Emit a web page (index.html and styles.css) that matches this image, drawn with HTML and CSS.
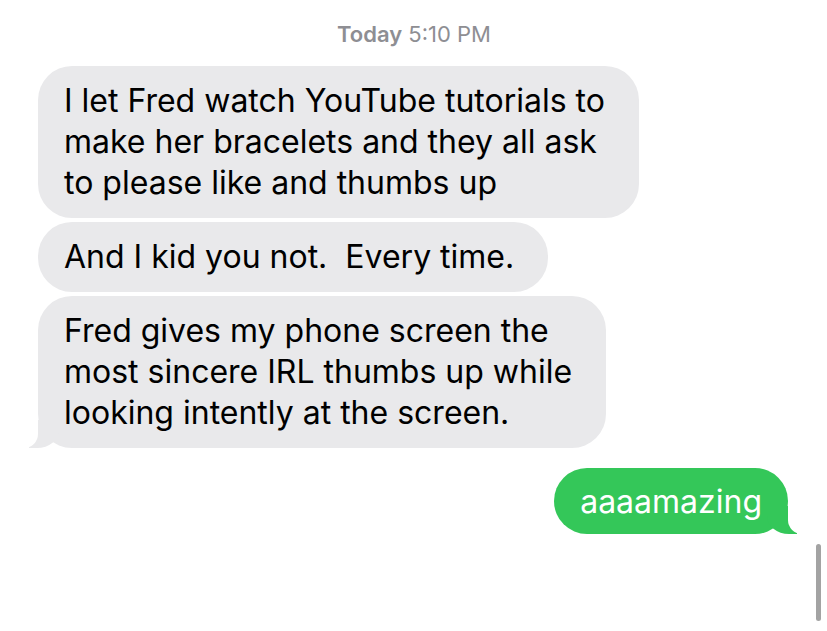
FILE: index.html
```html
<!DOCTYPE html>
<html lang="en">
<head>
    <meta charset="UTF-8">
    <meta name="viewport" content="width=device-width, initial-scale=1.0">
    <title>Messages</title>
    <link rel="stylesheet" href="styles.css">
</head>
<body>
    <div id="thread">
        <div class="stamp"><b>Today</b> 5:10 PM</div>
        <div class="bubble them">I let Fred watch YouTube tutorials to<br>make her bracelets and they all ask<br>to please like and thumbs up</div>
        <div class="bubble them">And I kid you not.&nbsp; Every time.</div>
        <div class="bubble them tail">Fred gives my phone screen the<br>most sincere IRL thumbs up while<br>looking intently at the screen.</div>
        <div class="bubble me tail">aaaamazing</div>
    </div>
    <div class="scrollbar"></div>
</body>
</html>
```
FILE: styles.css
```css
body{
    margin: 0;
    background: #ffffff;
    font-family: 'Inter', 'Liberation Sans', sans-serif;
    height: 631px;
    overflow: hidden;
    position: relative;
}

#thread{
    display: flex;
    flex-direction: column;
    align-items: flex-start;
    padding: 21px 39px 0 38px;
}

.stamp{
    align-self: center;
    color: #8e8e93;
    font-size: 22px;
    line-height: 26px;
    margin-bottom: 19px;
    margin-left: 2px;
}

.stamp b{
    font-weight: 600;
}

.bubble{
    position: relative;
    font-size: 32px;
    line-height: 41px;
    padding: 14px 34px 15px 26px;
    border-radius: 34px;
    margin-bottom: 4px;
}

.them{
    background: #e9e9eb;
    color: #000000;
}

.me{
    align-self: flex-end;
    background: #34c759;
    color: #ffffff;
    margin-top: 16px;
    padding: 13px 26px 12px 26px;
}

.tail::before,
.tail::after{
    content: '';
    position: absolute;
    bottom: 0;
    height: 28px;
}

.them.tail::before{
    left: -9px;
    width: 30px;
    background: #e9e9eb;
    border-bottom-right-radius: 22px 18px;
}

.them.tail::after{
    left: -26px;
    width: 26px;
    background: #ffffff;
    border-bottom-right-radius: 14px;
}

.me.tail::before{
    right: -9px;
    width: 30px;
    background: #34c759;
    border-bottom-left-radius: 22px 18px;
}

.me.tail::after{
    right: -26px;
    width: 26px;
    background: #ffffff;
    border-bottom-left-radius: 14px;
}

.scrollbar{
    position: absolute;
    right: 6px;
    top: 544px;
    width: 5px;
    height: 77px;
    border-radius: 3px;
    background: #a3a3a3;
}
```
